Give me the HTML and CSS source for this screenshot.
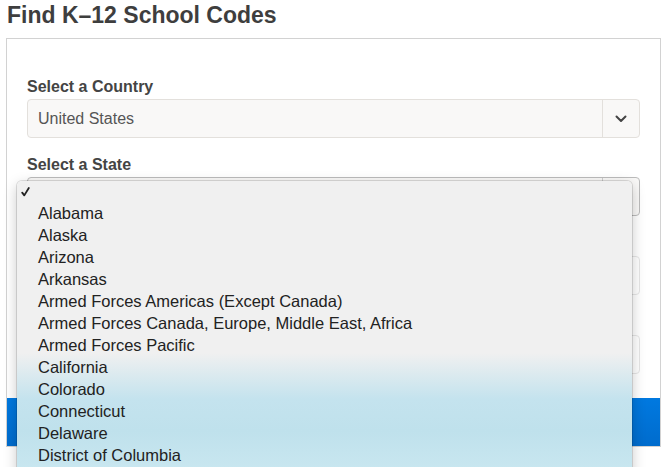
FILE: index.html
```html
<!DOCTYPE html>
<html lang="en">
<head>
<meta charset="utf-8">
<title>Find K–12 School Codes</title>
<link rel="stylesheet" href="styles.css">
</head>
<body>
<div class="page">
  <h1 class="title">Find K–12 School Codes</h1>
  <div class="card">
    <div class="form">
      <div class="group">
        <div class="label">Select a Country</div>
        <div class="select">
          <span class="select-value">United States</span>
          <span class="select-arrow">
            <svg width="12" height="8" viewBox="0 0 12 8"><polyline points="1.5,1.5 6,6 10.5,1.5" fill="none" stroke="#444" stroke-width="2" stroke-linecap="round" stroke-linejoin="round"/></svg>
          </span>
        </div>
      </div>
      <div class="group">
        <div class="label">Select a State</div>
        <div class="select select-focus">
          <span class="select-value"></span>
          <span class="select-arrow"></span>
        </div>
        <div class="menu">
          <div class="item checked"><svg class="check" width="9" height="10" viewBox="0 0 9 10"><polyline points="1.2,5.6 3.3,8.4 7.8,1" fill="none" stroke="#222" stroke-width="1.8" stroke-linecap="round" stroke-linejoin="round"/></svg></div>
          <div class="item">Alabama</div>
          <div class="item">Alaska</div>
          <div class="item">Arizona</div>
          <div class="item">Arkansas</div>
          <div class="item">Armed Forces Americas (Except Canada)</div>
          <div class="item">Armed Forces Canada, Europe, Middle East, Africa</div>
          <div class="item">Armed Forces Pacific</div>
          <div class="item">California</div>
          <div class="item">Colorado</div>
          <div class="item">Connecticut</div>
          <div class="item">Delaware</div>
          <div class="item">District of Columbia</div>
        </div>
      </div>
      <div class="group group-low">
        <div class="label label-hidden"></div>
        <div class="select select-plain"></div>
      </div>
      <div class="group group-low">
        <div class="label label-hidden"></div>
        <div class="select select-plain"></div>
      </div>
    </div>
    <div class="button"></div>
  </div>
</div>
</body>
</html>
```

FILE: styles.css
```css
html, body {
  margin: 0;
  padding: 0;
  height: 100%;
  overflow: hidden;
  background: #fff;
}

.page {
  padding: 2px 8px 0 6px;
  font-family: "Liberation Sans", Arial, sans-serif;
}

.title {
  margin: 0 0 10px 1px;
  font-size: 23px;
  line-height: 26px;
  font-weight: bold;
  color: #3e3e3e;
}

.card {
  border: 1px solid #d2d2d2;
  background: #fff;
}

.form {
  padding: 38px 20px 24px 20px;
  display: flex;
  flex-direction: column;
  gap: 17px;
}

.group {
  position: relative;
  display: flex;
  flex-direction: column;
  gap: 2px;
}

.group-low {
  margin-top: 1px;
}

.label {
  font-size: 16px;
  line-height: 20px;
  font-weight: bold;
  color: #444;
}

.label-hidden {
  height: 20px;
}

.select {
  height: 37px;
  border: 1px solid #e3e0dc;
  border-radius: 4px;
  background: #f9f8f7;
  display: flex;
  align-items: center;
}

.select-focus {
  border-color: #bcbcbc;
}

.select-plain {
  background: #fff;
  border-color: #e6e6e6;
}

.select-value {
  flex: 1;
  padding-left: 10px;
  font-size: 16px;
  color: #555;
}

.select-arrow {
  width: 36px;
  height: 100%;
  border-left: 1px solid #e3e0dc;
  display: flex;
  align-items: center;
  justify-content: center;
}

.select-focus .select-arrow {
  border-left-color: #cfcfcf;
}

.menu {
  position: absolute;
  top: 26px;
  left: -10px;
  width: 615px;
  padding-bottom: 30px;
  border-radius: 5px;
  background: linear-gradient(to bottom, #f0f0f0 0, #f0f0f0 172px, #c4e3ee 218px, #bfe1ec 250px, #c9e7f0 290px);
  box-shadow: 0 0 0 1px rgba(0, 0, 0, 0.12), 0 4px 14px rgba(0, 0, 0, 0.22);
  z-index: 5;
}

.item {
  height: 22px;
  line-height: 20px;
  padding-left: 21px;
  font-size: 16.5px;
  color: #222;
  white-space: nowrap;
  position: relative;
}

.check {
  position: absolute;
  left: 4px;
  top: 6px;
}

.button {
  height: 48px;
  background: linear-gradient(to bottom, #0079e0, #006ccd);
}
```
